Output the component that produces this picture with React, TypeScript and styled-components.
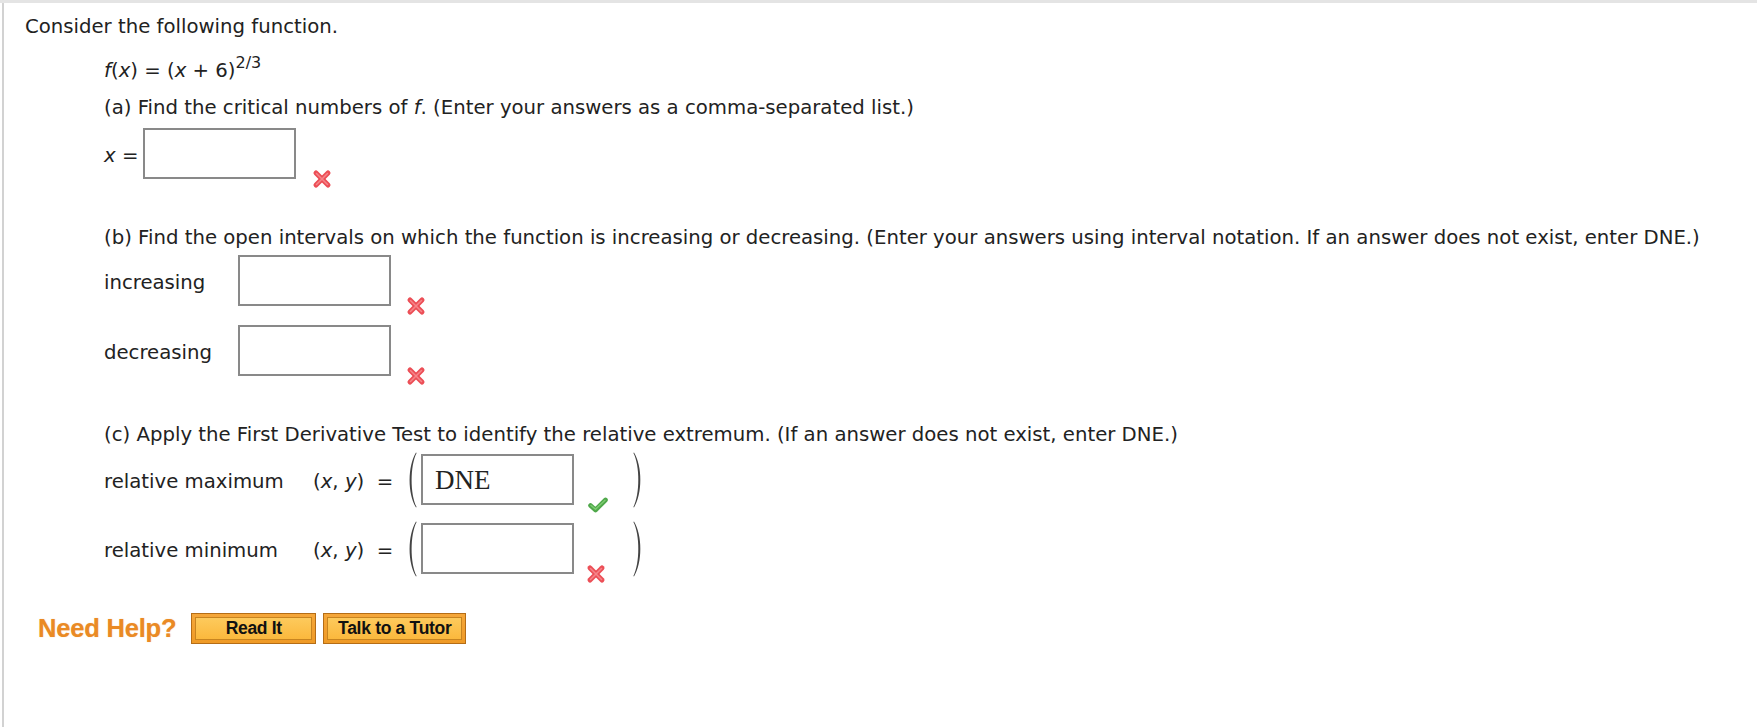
import React from "react";
import styled, { createGlobalStyle } from "styled-components";

const GlobalStyle = createGlobalStyle`
  html, body { margin: 0; padding: 0; background: #ffffff; }
  body {
    font-family: Verdana, "DejaVu Sans", sans-serif;
    color: #222222;
    -webkit-font-smoothing: antialiased;
  }
`;

const Frame = styled.div`
  box-sizing: border-box;
  height: 727px;
  border-top: 3px solid #e4e4e4;
  padding-left: 2px;
`;

const Panel = styled.div`
  box-sizing: border-box;
  height: 100%;
  border-left: 2px solid #d2d2d2;
  padding: 12px 0 0 21px;
  font-size: 19.7px;
  line-height: 24px;
`;

const Intro = styled.div``;

const Body = styled.div`
  margin-left: 79px;
  display: flex;
  flex-direction: column;
`;

const Line = styled.div<{ $top: number }>`
  margin-top: ${(p) => p.$top}px;
  white-space: nowrap;
`;

const Sup = styled.sup`
  font-size: 16px;
  position: relative;
  top: -1px;
  vertical-align: super;
  line-height: 0;
`;

const Var = styled.i`
  font-style: italic;
`;

const Row = styled.div<{ $top: number }>`
  margin-top: ${(p) => p.$top}px;
  display: flex;
  align-items: center;
  height: 51px;
`;

const Label = styled.span<{ $w: number }>`
  width: ${(p) => p.$w}px;
  flex: none;
  padding-top: 5px;
  white-space: nowrap;
`;

const Pair = styled.span`
  width: 94px;
  flex: none;
  padding-top: 5px;
  white-space: nowrap;
`;

const Box = styled.input`
  box-sizing: border-box;
  width: 153px;
  height: 51px;
  flex: none;
  margin: 0;
  border: 2px solid #898989;
  border-radius: 0;
  background: #ffffff;
  padding: 2px 12px 0;
  font-family: "Liberation Serif", "Times New Roman", serif;
  font-size: 27px;
  color: #222222;
  outline: none;
`;

const Mark = styled.span<{ $gap: number }>`
  flex: none;
  align-self: flex-end;
  margin-left: ${(p) => p.$gap}px;
  margin-bottom: -11px;
  width: 22px;
  height: 22px;
  display: flex;
  align-items: center;
  justify-content: center;
`;

const Paren = styled.svg<{ $gap: number }>`
  flex: none;
  margin-left: ${(p) => p.$gap}px;
  margin-right: ${(p) => (p.$gap ? 0 : 4)}px;
`;

const Footer = styled.div`
  margin-top: 39px;
  margin-left: 13px;
  display: flex;
  align-items: center;
  height: 30px;
`;

const HelpText = styled.span`
  font-family: "Liberation Sans", Arial, sans-serif;
  font-weight: bold;
  font-size: 25.5px;
  color: #ea8a24;
  letter-spacing: -0.2px;
  margin-right: 15px;
  text-shadow: 0 0 1px rgba(234, 138, 36, 0.5);
`;

const HelpButton = styled.button<{ $w: number }>`
  box-sizing: border-box;
  width: ${(p) => p.$w}px;
  height: 31px;
  margin: 0 7px 0 0;
  padding: 3px;
  border: 1px solid #b56d16;
  background: linear-gradient(#f5a73a, #ef9a26);
  cursor: pointer;
  display: flex;
`;

const ButtonFace = styled.span`
  flex: 1;
  display: flex;
  align-items: center;
  justify-content: center;
  border: 1px solid #c8841f;
  background: linear-gradient(#fdca5c, #fbb83d);
  font-family: "Liberation Sans", Arial, sans-serif;
  font-weight: bold;
  font-size: 17.5px;
  letter-spacing: -0.3px;
  color: #111111;
`;

const Cross = () => (
  <svg width="20" height="20" viewBox="0 0 20 20">
    <g strokeLinecap="round">
      <line x1="4" y1="4" x2="16" y2="16" stroke="#ec4e56" strokeWidth="5" />
      <line x1="16" y1="4" x2="4" y2="16" stroke="#ec4e56" strokeWidth="5" />
      <line x1="4.5" y1="4.5" x2="15.5" y2="15.5" stroke="#f58489" strokeWidth="1.6" />
      <line x1="15.5" y1="4.5" x2="4.5" y2="15.5" stroke="#f58489" strokeWidth="1.6" />
    </g>
  </svg>
);

const Check = () => (
  <svg width="22" height="18" viewBox="0 0 22 18">
    <polyline
      points="3.5,9.5 8.5,14 18.5,4"
      fill="none"
      stroke="#4fa84a"
      strokeWidth="4.6"
      strokeLinecap="round"
      strokeLinejoin="round"
    />
    <polyline
      points="4,9.5 8.5,13.3 18,4.3"
      fill="none"
      stroke="#7fcc72"
      strokeWidth="1.4"
      strokeLinecap="round"
      strokeLinejoin="round"
    />
  </svg>
);

const LeftParen = () => (
  <Paren $gap={0} width="10" height="56" viewBox="0 0 10 56">
    <path d="M9 0.5 C0.5 14 0.5 42 9 55.5 L9.6 55 C3 42 3 14 9.6 1 Z" fill="#444" />
  </Paren>
);

const RightParen = ({ gap }: { gap: number }) => (
  <Paren $gap={gap} width="10" height="56" viewBox="0 0 10 56">
    <path d="M1 0.5 C9.5 14 9.5 42 1 55.5 L0.4 55 C7 42 7 14 0.4 1 Z" fill="#444" />
  </Paren>
);

export default function App() {
  return (
    <>
      <GlobalStyle />
      <Frame>
        <Panel>
          <Intro>Consider the following function.</Intro>
          <Body>
            <Line $top={20}>
              <Var>f</Var>(<Var>x</Var>) = (<Var>x</Var> + 6)<Sup>2/3</Sup>
            </Line>
            <Line $top={13}>
              (a) Find the critical numbers of <Var>f</Var>. (Enter your answers as a comma-separated list.)
            </Line>
            <Row $top={8}>
              <Label $w={39}>
                <Var>x</Var> =
              </Label>
              <Box readOnly defaultValue="" />
              <Mark $gap={15}>
                <Cross />
              </Mark>
            </Row>

            <Line $top={47}>
              (b) Find the open intervals on which the function is increasing or decreasing. (Enter your answers using interval notation. If an answer does not exist, enter DNE.)
            </Line>
            <Row $top={5}>
              <Label $w={134}>increasing</Label>
              <Box readOnly defaultValue="" />
              <Mark $gap={14}>
                <Cross />
              </Mark>
            </Row>
            <Row $top={19}>
              <Label $w={134}>decreasing</Label>
              <Box readOnly defaultValue="" />
              <Mark $gap={14}>
                <Cross />
              </Mark>
            </Row>

            <Line $top={47}>
              (c) Apply the First Derivative Test to identify the relative extremum. (If an answer does not exist, enter DNE.)
            </Line>
            <Row $top={7}>
              <Label $w={209}>relative maximum</Label>
              <Pair>
                (<Var>x</Var>, <Var>y</Var>) &nbsp;=
              </Pair>
              <LeftParen />
              <Box readOnly defaultValue="DNE" />
              <Mark $gap={13}>
                <Check />
              </Mark>
              <RightParen gap={24} />
            </Row>
            <Row $top={18}>
              <Label $w={209}>relative minimum</Label>
              <Pair>
                (<Var>x</Var>, <Var>y</Var>) &nbsp;=
              </Pair>
              <LeftParen />
              <Box readOnly defaultValue="" />
              <Mark $gap={11}>
                <Cross />
              </Mark>
              <RightParen gap={26} />
            </Row>
          </Body>
          <Footer>
            <HelpText>Need Help?</HelpText>
            <HelpButton $w={125}>
              <ButtonFace>Read It</ButtonFace>
            </HelpButton>
            <HelpButton $w={143}>
              <ButtonFace>Talk to a Tutor</ButtonFace>
            </HelpButton>
          </Footer>
        </Panel>
      </Frame>
    </>
  );
}
